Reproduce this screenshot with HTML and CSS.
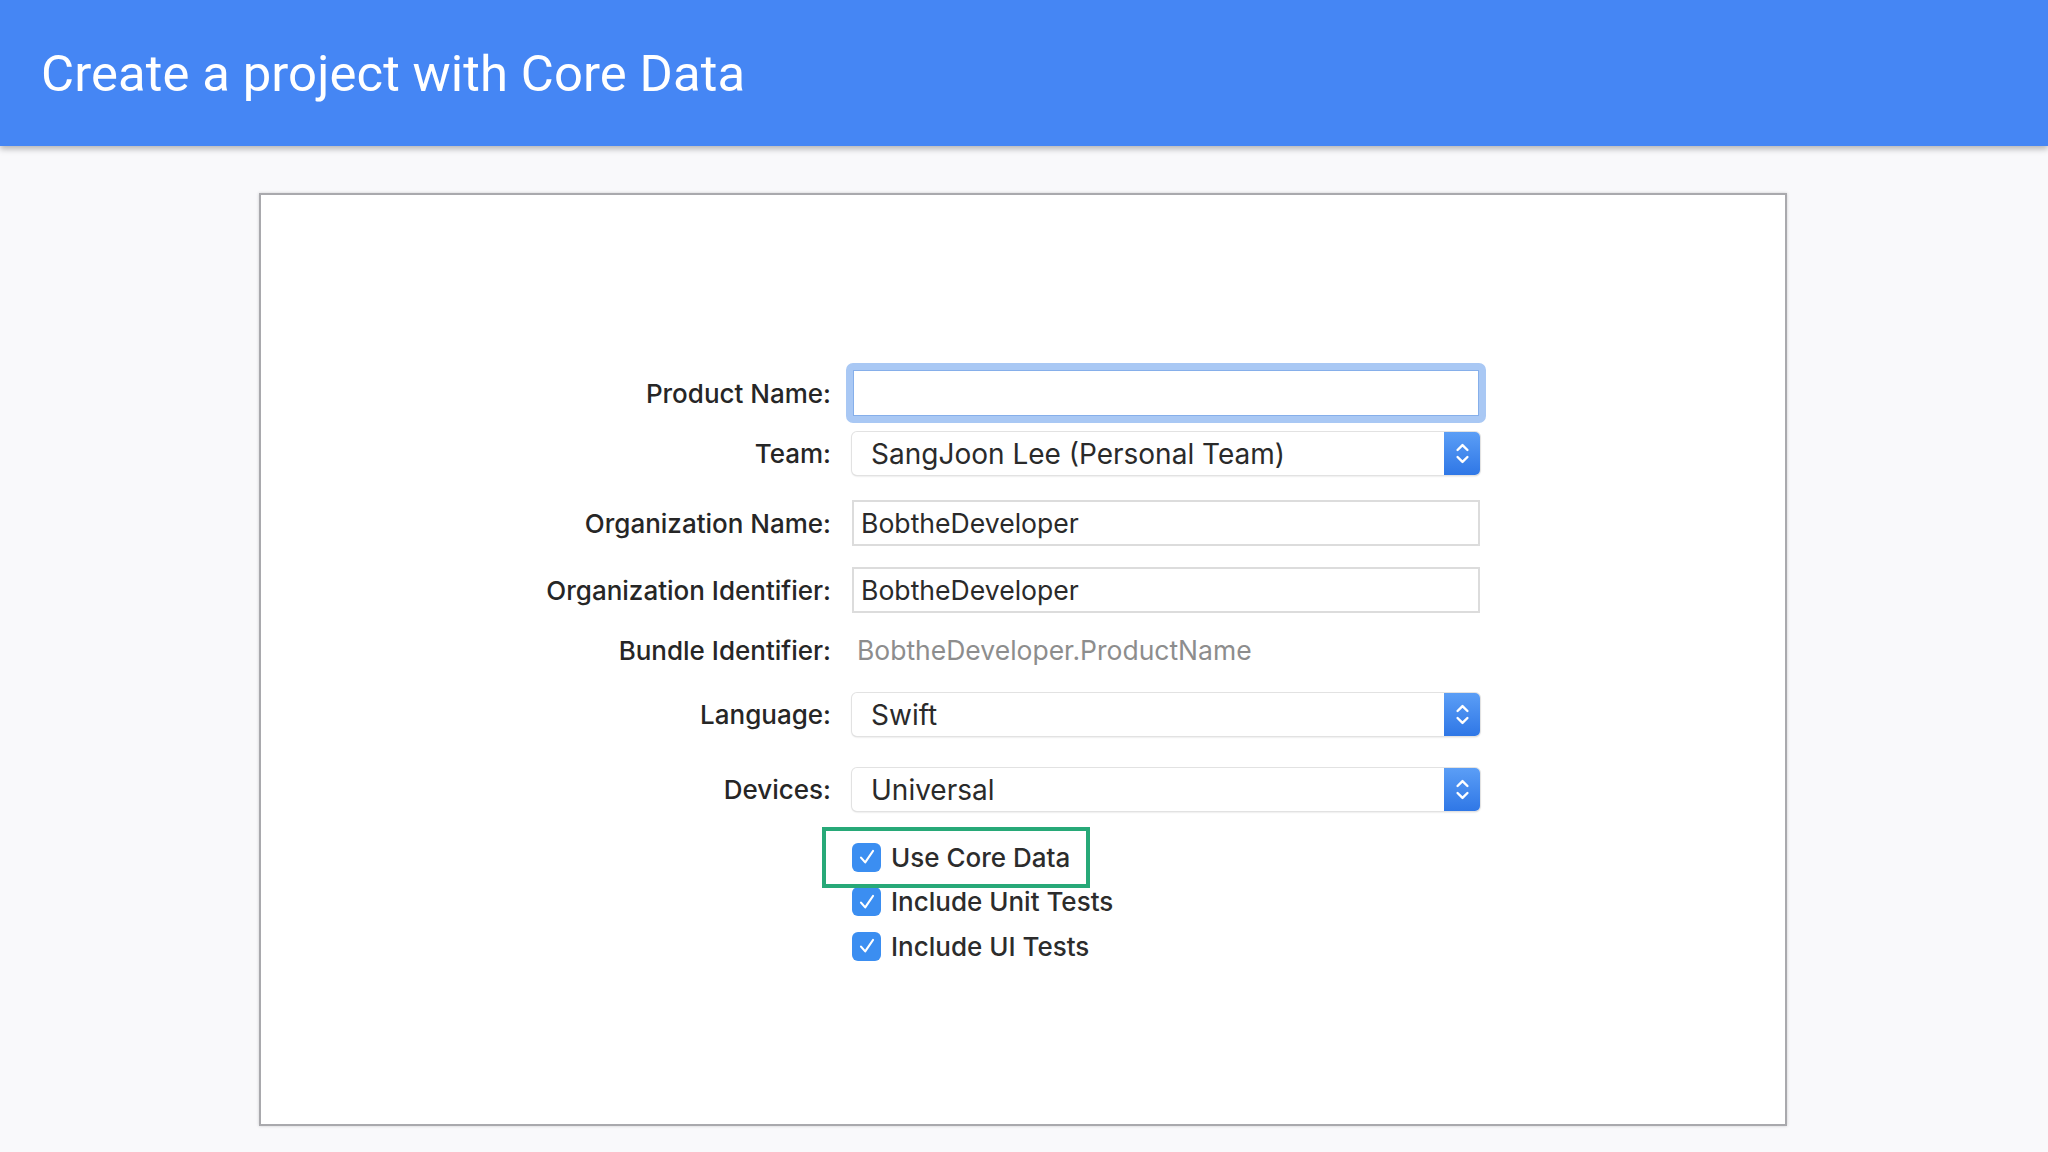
FILE: index.html
```html
<!DOCTYPE html>
<html>
<head>
<meta charset="utf-8">
<link rel="stylesheet" href="styles.css">
</head>
<body>
<header class="bar">
  <h1 class="title">Create a project with Core Data</h1>
</header>
<main class="stage">
  <section class="shot">
    <div class="form">
      <label class="lbl">Product Name:</label>
      <div class="ctl"><div class="field focus"></div></div>

      <label class="lbl">Team:</label>
      <div class="ctl"><div class="select"><span class="sval">SangJoon Lee (Personal Team)</span><span class="step"><svg viewBox="0 0 12 22" width="17" height="31"><path d="M2.5 8.5 L6 5 L9.5 8.5 M2.5 13.5 L6 17 L9.5 13.5" fill="none" stroke="#fff" stroke-width="1.7" stroke-linecap="round" stroke-linejoin="round"/></svg></span></div></div>

      <label class="lbl">Organization Name:</label>
      <div class="ctl"><div class="field">BobtheDeveloper</div></div>

      <label class="lbl">Organization Identifier:</label>
      <div class="ctl"><div class="field">BobtheDeveloper</div></div>

      <label class="lbl">Bundle Identifier:</label>
      <div class="ctl"><span class="plain">BobtheDeveloper.ProductName</span></div>

      <label class="lbl">Language:</label>
      <div class="ctl"><div class="select"><span class="sval">Swift</span><span class="step"><svg viewBox="0 0 12 22" width="17" height="31"><path d="M2.5 8.5 L6 5 L9.5 8.5 M2.5 13.5 L6 17 L9.5 13.5" fill="none" stroke="#fff" stroke-width="1.7" stroke-linecap="round" stroke-linejoin="round"/></svg></span></div></div>

      <label class="lbl">Devices:</label>
      <div class="ctl"><div class="select"><span class="sval">Universal</span><span class="step"><svg viewBox="0 0 12 22" width="17" height="31"><path d="M2.5 8.5 L6 5 L9.5 8.5 M2.5 13.5 L6 17 L9.5 13.5" fill="none" stroke="#fff" stroke-width="1.7" stroke-linecap="round" stroke-linejoin="round"/></svg></span></div></div>
    </div>
    <div class="checks">
      <div class="highlight"></div>
      <div class="check"><span class="box"><svg viewBox="0 0 20 20" width="24" height="24"><path d="M5 10.5 L8.5 14.5 L15 5" fill="none" stroke="#fff" stroke-width="1.8" stroke-linecap="round" stroke-linejoin="round"/></svg></span><span class="ctext">Use Core Data</span></div>
      <div class="check"><span class="box"><svg viewBox="0 0 20 20" width="24" height="24"><path d="M5 10.5 L8.5 14.5 L15 5" fill="none" stroke="#fff" stroke-width="1.8" stroke-linecap="round" stroke-linejoin="round"/></svg></span><span class="ctext">Include Unit Tests</span></div>
      <div class="check"><span class="box"><svg viewBox="0 0 20 20" width="24" height="24"><path d="M5 10.5 L8.5 14.5 L15 5" fill="none" stroke="#fff" stroke-width="1.8" stroke-linecap="round" stroke-linejoin="round"/></svg></span><span class="ctext">Include UI Tests</span></div>
    </div>
  </section>
</main>
</body>
</html>
```

FILE: styles.css
```css
html, body {
  margin: 0;
  padding: 0;
}
body {
  width: 2048px;
  height: 1152px;
  overflow: hidden;
  background: #f9f9fb;
  font-family: Inter, "Liberation Sans", sans-serif;
}
.bar {
  height: 146px;
  background: #4586f4;
  box-shadow: 0 3px 6px rgba(0, 0, 0, 0.28);
  display: flex;
  align-items: center;
  padding-left: 41px;
  position: relative;
  z-index: 1;
}
.title {
  margin: 0;
  font-family: Roboto, sans-serif;
  font-weight: 400;
  font-size: 50.8px;
  color: #ffffff;
  letter-spacing: 0.1px;
}
.stage {
  padding-top: 47px;
  padding-left: 259px;
}
.shot {
  background: #ffffff;
  border: 2px solid #a9a9ad;
  box-shadow: 0 0 3px rgba(0, 0, 0, 0.18);
  padding-top: 168px;
  padding-left: 260px;
  box-sizing: border-box;
  width: 1528px;
  height: 933px;
}
.form {
  display: grid;
  grid-template-columns: 310px 640px;
  grid-template-rows: 60px 61px 78px 56px 64px 65px 85px;
  column-gap: 15px;
  align-items: center;
}
.lbl {
  text-align: right;
  font-size: 26px;
  font-weight: 500;
  color: #262626;
  white-space: nowrap;
}
.ctl {
  display: flex;
  align-items: center;
}
.field {
  margin-left: 6px;
  width: 628px;
  height: 46px;
  box-sizing: border-box;
  border: 2px solid #dcdcdc;
  background: #fff;
  display: flex;
  align-items: center;
  padding-left: 7px;
  font-size: 26.6px;
  color: #2a2a2a;
}
.field.focus {
  margin-left: 0;
  width: 640px;
  height: 60px;
  border: 7px solid #a9c8f4;
  border-radius: 7px;
  box-shadow: inset 0 0 0 1px #86afea;
}
.select {
  margin-left: 6px;
  width: 628px;
  height: 43px;
  box-sizing: border-box;
  background: #fff;
  border-radius: 5px;
  box-shadow: 0 0 0 1px #e2e2e2, 0 1px 2px rgba(0, 0, 0, 0.22);
  display: flex;
  align-items: center;
  justify-content: space-between;
}
.sval {
  padding-left: 19px;
  font-size: 28px;
  color: #2a2a2a;
}
.step {
  width: 36px;
  height: 43px;
  border-radius: 0 5px 5px 0;
  background: linear-gradient(#5b9ef6, #2f77e6);
  display: flex;
  align-items: center;
  justify-content: center;
}
.plain {
  padding-left: 11px;
  font-size: 26.5px;
  color: #8d8d8d;
}
.checks {
  position: relative;
  margin-left: 331px;
  margin-top: 3px;
  width: 400px;
}
.highlight {
  position: absolute;
  left: -30px;
  top: -8px;
  width: 268px;
  height: 61px;
  box-sizing: border-box;
  border: 4px solid #27a978;
}
.check {
  height: 44.5px;
  display: flex;
  align-items: center;
  gap: 10px;
}
.box {
  width: 29px;
  height: 29px;
  border-radius: 6px;
  background: #3b8ef1;
  display: flex;
  align-items: center;
  justify-content: center;
}
.ctext {
  font-size: 26px;
  font-weight: 500;
  color: #2c2c2c;
}
```
